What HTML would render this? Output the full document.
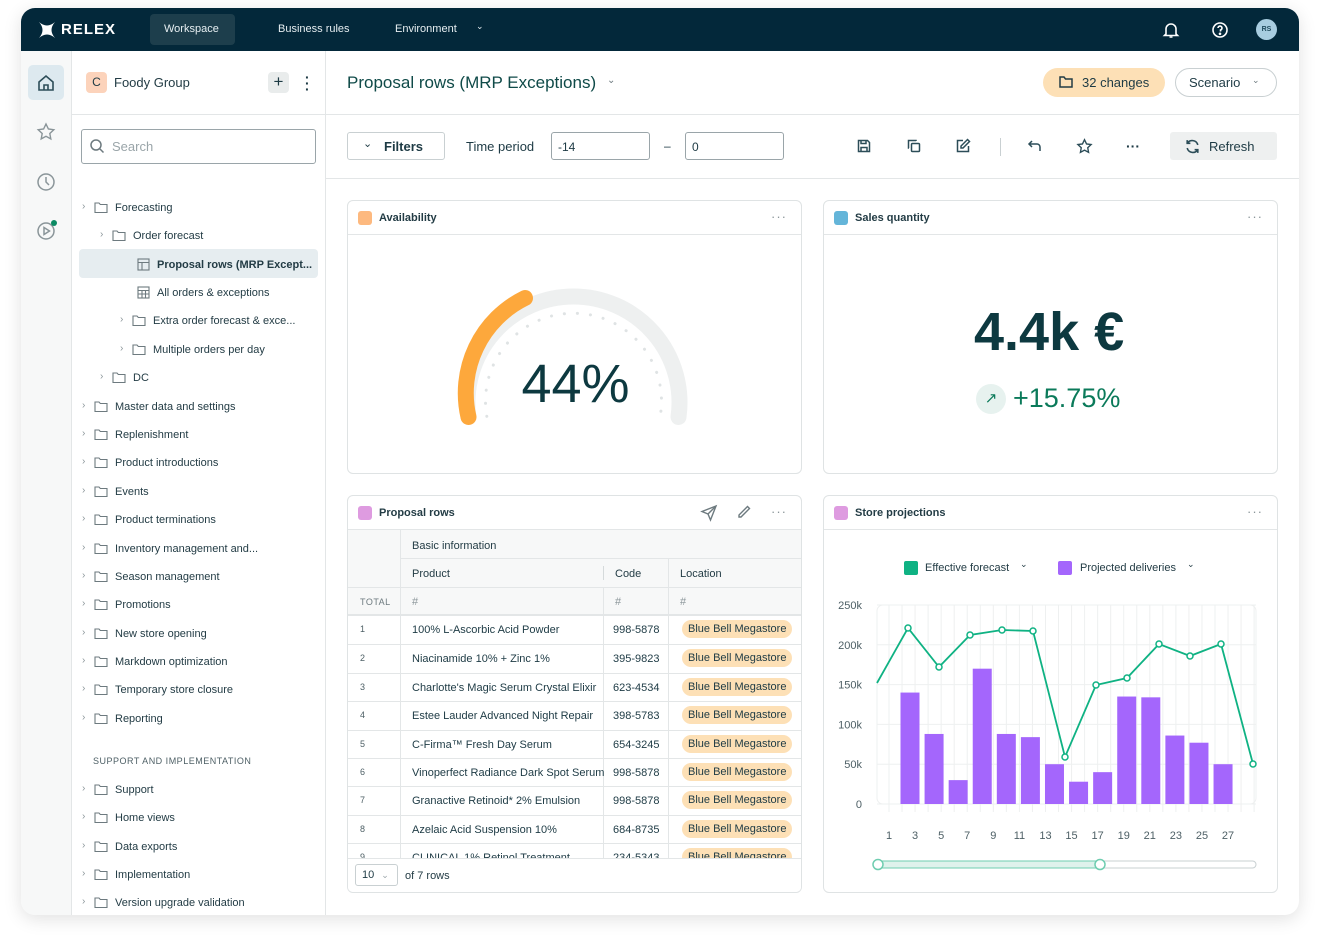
<!DOCTYPE html>
<html><head><meta charset="utf-8"><style>
*{box-sizing:border-box;margin:0;padding:0}
body{width:1320px;height:950px;background:#fff;font-family:"Liberation Sans",sans-serif;color:#1d3a44;position:relative;overflow:hidden}
.a{position:absolute}
.app{position:absolute;left:21px;top:8px;width:1278px;height:907px;border-radius:14px;overflow:hidden;background:#fff;box-shadow:0 4px 18px rgba(0,0,0,.12)}
.top{position:absolute;left:0;top:0;width:1278px;height:43px;background:#03283a;color:#e6eef1;font-size:11px}
.t{font-size:11px;color:#233c45;white-space:nowrap}
.card{position:absolute;border:1px solid #dfe3e4;border-radius:6px;background:#fff;overflow:hidden}
.ch{position:absolute;left:0;top:0;right:0;height:34px;border-bottom:1px solid #e3e6e7}
.sq{position:absolute;left:10px;top:10px;width:14px;height:14px;border-radius:3px}
.ct{position:absolute;left:31px;top:11px;font-size:11px;font-weight:bold;color:#233c45}
.dots{position:absolute;right:14px;top:8px;font-size:13px;color:#8a9599;letter-spacing:1px}
.tr{position:absolute;left:0;width:453px;height:28px;border-top:1px solid #e3e6e7;font-size:11px}
.tr span{position:absolute;top:8px}
.pill{position:absolute;left:334px;top:4px;background:#fde0b6;border-radius:10px;padding:3px 6px;font-size:11px}
.fi{position:absolute;font-size:11px;color:#233c45;white-space:nowrap}
</style></head><body>
<div class="app">
 <div class="top">
  <svg class="a" style="left:16px;top:12px" width="20" height="20" viewBox="0 0 20 20"><path d="M2 2 Q10 9 18 2 Q11 10 18 18 Q10 11 2 18 Q9 10 2 2Z" fill="#fff"/></svg>
  <div class="a" style="left:40px;top:13px;font-size:15px;font-weight:bold;letter-spacing:1px;color:#fff">RELEX</div>
  <div class="a" style="left:129px;top:6px;width:85px;height:31px;background:#1d3e4c;border-radius:4px"></div>
  <div class="a" style="left:143px;top:15px">Workspace</div>
  <div class="a" style="left:257px;top:15px">Business rules</div>
  <div class="a" style="left:374px;top:15px">Environment</div>
  <div class="a" style="left:455px;top:13px;font-size:9px">⌄</div>
  <svg class="a" style="left:1141px;top:13px" width="18" height="18" viewBox="0 0 18 18" fill="none" stroke="#fff" stroke-width="1.6"><path d="M4 13V8a5 5 0 0 1 10 0v5l1.5 1.5h-13Z"/><path d="M7.5 16h3"/></svg>
  <svg class="a" style="left:1190px;top:13px" width="18" height="18" viewBox="0 0 18 18" fill="none" stroke="#fff" stroke-width="1.6"><circle cx="9" cy="9" r="7"/><path d="M7 7a2 2 0 1 1 2.5 2v1.5"/><circle cx="9" cy="12.8" r=".5" fill="#fff"/></svg>
  <div class="a" style="left:1235px;top:11px;width:21px;height:21px;border-radius:50%;background:#a8cde0;color:#1f4a5c;font-size:7px;font-weight:bold;text-align:center;line-height:21px">RS</div>
 </div>
 <div class="a" style="left:0;top:43px;width:51px;height:864px;background:#f7f8f8;border-right:1px solid #e3e6e7"></div>
 <div class="a" style="left:7px;top:57px;width:36px;height:35px;background:#dde9ef;border-radius:5px"></div>
 <svg class="a" style="left:15px;top:65px" width="20" height="20" viewBox="0 0 20 20" fill="none" stroke="#2c4d58" stroke-width="1.6"><path d="M3 9 10 3l7 6v8H3Z"/><path d="M8 17v-5h4v5"/></svg>
 <svg class="a" style="left:15px;top:114px" width="20" height="20" viewBox="0 0 20 20" fill="none" stroke="#8a9599" stroke-width="1.4"><path d="M10 2l2.4 5 5.4.7-4 3.8 1 5.4-4.8-2.6-4.8 2.6 1-5.4-4-3.8 5.4-.7Z"/></svg>
 <svg class="a" style="left:15px;top:164px" width="20" height="20" viewBox="0 0 20 20" fill="none" stroke="#8a9599" stroke-width="1.5"><circle cx="10" cy="10" r="8"/><path d="M10 5v5l3 3"/></svg>
 <svg class="a" style="left:15px;top:213px" width="20" height="20" viewBox="0 0 20 20" fill="none" stroke="#8a9599" stroke-width="1.5"><circle cx="10" cy="10" r="8"/><path d="M8 6.5v7l5.5-3.5Z"/></svg>
 <div class="a" style="left:30px;top:212px;width:6px;height:6px;border-radius:50%;background:#0b8a63"></div>
 <div class="a" style="left:304px;top:43px;width:1px;height:864px;background:#e3e6e7"></div>
 <div class="a" style="left:51px;top:106px;width:253px;height:1px;background:#e3e6e7"></div>
 <div class="a" style="left:65px;top:64px;width:21px;height:21px;background:#fcd3bb;border-radius:4px;font-size:12px;text-align:center;line-height:21px">C</div>
 <div class="a" style="left:93px;top:67px;font-size:13px;color:#233c45">Foody Group</div>
 <div class="a" style="left:247px;top:64px;width:21px;height:21px;background:#e9ecec;border-radius:4px;font-size:17px;text-align:center;line-height:20px">+</div>
 <div class="a" style="left:284px;top:66px;font-size:14px;line-height:6px;font-weight:bold">·<br>·<br>·</div>
 <div class="a" style="left:60px;top:121px;width:235px;height:35px;border:1px solid #9aa5a9;border-radius:3px"></div>
 <svg class="a" style="left:68px;top:130px" width="16" height="16" viewBox="0 0 16 16" fill="none" stroke="#6d7a7f" stroke-width="1.5"><circle cx="7" cy="7" r="5"/><path d="M11 11l3.5 3.5"/></svg>
 <div class="a" style="left:91px;top:131px;font-size:13px;color:#9aa5a9">Search</div>
 <div class="a" style="left:58px;top:241px;width:239px;height:29px;background:#e6edf0;border-radius:4px"></div>
 <div id="tree"></div>
 <div class="a" style="left:305px;top:106px;width:973px;height:1px;background:#e3e6e7"></div>
 <div class="a" style="left:305px;top:170px;width:973px;height:1px;background:#e3e6e7"></div>
 <div class="a" style="left:326px;top:65px;font-size:17px;color:#0f4a48">Proposal rows (MRP Exceptions)</div>
 <div class="a" style="left:586px;top:67px;font-size:10px;color:#6d7a7f">⌄</div>
 <div class="a" style="left:1022px;top:60px;width:122px;height:29px;background:#fde0b6;border-radius:15px"></div>
 <svg class="a" style="left:1037px;top:66px" width="16" height="16" viewBox="0 0 16 16" fill="none" stroke="#233c45" stroke-width="1.5"><path d="M2 3h4l1.5 2H14v8H2Z"/></svg>
 <div class="a" style="left:1061px;top:67px;font-size:13px">32 changes</div>
 <div class="a" style="left:1154px;top:60px;width:102px;height:29px;border:1px solid #c9d0d2;border-radius:15px"></div>
 <div class="a" style="left:1168px;top:67px;font-size:13px">Scenario</div>
 <div class="a" style="left:1231px;top:67px;font-size:9px;color:#6d7a7f">⌄</div>
 <div class="a" style="left:326px;top:124px;width:98px;height:28px;border:1px solid #c9d0d2;border-radius:3px"></div>
 <div class="a" style="left:342px;top:129px;font-size:11px">⌄</div>
 <div class="a" style="left:363px;top:131px;font-size:13px;font-weight:bold">Filters</div>
 <div class="a" style="left:445px;top:131px;font-size:13px">Time period</div>
 <div class="a" style="left:530px;top:124px;width:99px;height:28px;border:1px solid #9aa5a9;border-radius:3px;font-size:12px;padding:7px 6px">-14</div>
 <div class="a" style="left:643px;top:131px;font-size:12px">–</div>
 <div class="a" style="left:664px;top:124px;width:99px;height:28px;border:1px solid #9aa5a9;border-radius:3px;font-size:12px;padding:7px 6px">0</div>
 <svg class="a" style="left:835px;top:130px" width="16" height="16" viewBox="0 0 16 16" fill="none" stroke="#2c4d58" stroke-width="1.5"><path d="M2.5 2.5h9l2 2v9h-11Z"/><path d="M5 2.5v3h5v-3M5 13.5v-4h6v4"/></svg>
 <svg class="a" style="left:885px;top:130px" width="16" height="16" viewBox="0 0 16 16" fill="none" stroke="#2c4d58" stroke-width="1.5"><rect x="5.5" y="5.5" width="8" height="8" rx="1"/><path d="M10 3V2.5H2.5V10H3"/></svg>
 <svg class="a" style="left:934px;top:130px" width="16" height="16" viewBox="0 0 16 16" fill="none" stroke="#2c4d58" stroke-width="1.5"><path d="M8 2.5H2.5v11h11V8"/><path d="M12.5 1.5l2 2L8 10H6V8Z"/></svg>
 <div class="a" style="left:979px;top:130px;width:1px;height:18px;background:#c9d0d2"></div>
 <svg class="a" style="left:1006px;top:130px" width="16" height="16" viewBox="0 0 16 16" fill="none" stroke="#2c4d58" stroke-width="1.5"><path d="M5 3L2 6l3 3"/><path d="M2 6h8a3 3 0 0 1 3 3v4"/></svg>
 <svg class="a" style="left:1055px;top:130px" width="17" height="17" viewBox="0 0 20 20" fill="none" stroke="#2c4d58" stroke-width="1.6"><path d="M10 2l2.4 5 5.4.7-4 3.8 1 5.4-4.8-2.6-4.8 2.6 1-5.4-4-3.8 5.4-.7Z"/></svg>
 <div class="a" style="left:1105px;top:130px;font-size:14px;font-weight:bold">···</div>
 <div class="a" style="left:1149px;top:124px;width:107px;height:28px;background:#eef0f0;border-radius:3px"></div>
 <svg class="a" style="left:1163px;top:130px" width="17" height="17" viewBox="0 0 16 16" fill="none" stroke="#2c4d58" stroke-width="1.5"><path d="M13 6.5A5.5 5.5 0 0 0 3 5M3 9.5A5.5 5.5 0 0 0 13 11"/><path d="M3 2v3h3M13 14v-3h-3"/></svg>
 <div class="a" style="left:1188px;top:131px;font-size:13px">Refresh</div>

 <div class="card" style="left:326px;top:192px;width:455px;height:274px">
  <div class="ch"><div class="sq" style="background:#fdb97f"></div><div class="ct">Availability</div><div class="dots">···</div></div>
  <svg class="a" style="left:0;top:0" width="455" height="274">
   <path d="M120.5 216 A106 106 0 1 1 330.5 216" fill="none" stroke="#eef0f0" stroke-width="16" stroke-linecap="round"/>
   <path d="M120.5 216 A106 106 0 0 1 177 97" fill="none" stroke="#fda83c" stroke-width="16" stroke-linecap="round"/>
   <path d="M138.8 215.3 A88 88 0 1 1 312.2 215.3" fill="none" stroke="#dfe3e4" stroke-width="3" stroke-dasharray="0.1 13" stroke-linecap="round"/>
  </svg>
  <div class="a" style="left:0;width:455px;top:152px;text-align:center;font-size:54px;color:#0d3940">44%</div>
 </div>
 <div class="card" style="left:802px;top:192px;width:455px;height:274px">
  <div class="ch"><div class="sq" style="background:#64b5d9"></div><div class="ct">Sales quantity</div><div class="dots">···</div></div>
  <div class="a" style="left:150px;top:100px;font-size:54px;font-weight:bold;color:#0d3940">4.4k €</div>
  <div class="a" style="left:152px;top:183px;width:30px;height:30px;border-radius:50%;background:#e7f2ef;color:#0b7a5a;font-size:15px;text-align:center;line-height:30px">↗</div>
  <div class="a" style="left:189px;top:182px;font-size:27px;color:#0b7a5a">+15.75%</div>
 </div>
 <div class="card" style="left:326px;top:487px;width:455px;height:398px">
  <div class="ch"><div class="sq" style="background:#de9be0"></div><div class="ct">Proposal rows</div><div class="dots">···</div>
   <svg class="a" style="left:352px;top:8px" width="18" height="18" viewBox="0 0 18 18" fill="none" stroke="#6d7a7f" stroke-width="1.4"><path d="M16 2 2 7.5l6 2.5 2.5 6Z"/><path d="M16 2 8 10"/></svg>
   <svg class="a" style="left:388px;top:8px" width="16" height="16" viewBox="0 0 16 16" fill="none" stroke="#6d7a7f" stroke-width="1.4"><path d="M11.5 2.5l2 2L5 13H3v-2Z"/></svg>
  </div>
  <div class="a" style="left:0;top:34px;width:455px;height:85px;background:#f7f8f8"></div>
  <div class="a" style="left:52px;top:34px;width:1px;height:330px;background:#e3e6e7"></div>
  <div class="a" style="left:52px;top:62px;width:403px;height:1px;background:#e3e6e7"></div>
  <div class="a" style="left:255px;top:91px;width:1px;height:273px;background:#e3e6e7"></div>
  <div class="a" style="left:320px;top:62px;width:1px;height:302px;background:#e3e6e7"></div>
  <div class="a" style="left:255px;top:70px;width:1px;height:14px;background:#d5dadb"></div>
  <div class="a" style="left:0;top:91px;width:455px;height:1px;background:#e3e6e7"></div>
  <div class="fi" style="left:64px;top:44px">Basic information</div>
  <div class="fi" style="left:64px;top:72px">Product</div>
  <div class="fi" style="left:267px;top:72px">Code</div>
  <div class="fi" style="left:332px;top:72px">Location</div>
  <div class="fi" style="left:12px;top:101px;font-size:9px;color:#6d7a7f;letter-spacing:.5px">TOTAL</div>
  <div class="fi" style="left:64px;top:100px;color:#8a9599">#</div>
  <div class="fi" style="left:267px;top:100px;color:#8a9599">#</div>
  <div class="fi" style="left:332px;top:100px;color:#8a9599">#</div>
  <div class="a" style="left:0;top:118px;width:455px;height:2px;background:#e3e6e7"></div>
  <div id="rows"></div>
  <div class="a" style="left:0;top:362px;width:455px;height:36px;background:#fff;border-top:1px solid #e3e6e7"></div>
  <div class="a" style="left:7px;top:368px;width:43px;height:22px;border:1px solid #c9d0d2;border-radius:3px;font-size:11px;padding:4px 6px">10 <span style="color:#9aa5a9;font-size:9px;margin-left:4px">⌄</span></div>
  <div class="fi" style="left:57px;top:374px">of 7 rows</div>
 </div>
 <div class="card" style="left:802px;top:487px;width:455px;height:398px">
  <div class="ch"><div class="sq" style="background:#de9be0"></div><div class="ct">Store projections</div><div class="dots">···</div></div>
  <div class="a" style="left:80px;top:65px;width:14px;height:14px;border-radius:2px;background:#0fb283"></div>
  <div class="fi" style="left:101px;top:66px">Effective forecast</div>
  <div class="fi" style="left:196px;top:63px;font-size:9px">⌄</div>
  <div class="a" style="left:234px;top:65px;width:14px;height:14px;border-radius:2px;background:#a466fc"></div>
  <div class="fi" style="left:256px;top:66px">Projected deliveries</div>
  <div class="fi" style="left:363px;top:63px;font-size:9px">⌄</div>
 </div>
 <svg class="a" style="left:0;top:0" width="1278" height="907" id="chart"></svg>
</div>
<script>
var tree=[[0,'Forecasting',207,'f'],[1,'Order forecast',235,'f'],[2,'Proposal rows (MRP Except...',264,'t',1],[2,'All orders &amp; exceptions',292,'t'],[2,'Extra order forecast &amp; exce...',320,'f'],[2,'Multiple orders per day',349,'f'],[1,'DC',377,'f'],[0,'Master data and settings',406,'f'],[0,'Replenishment',434,'f'],[0,'Product introductions',462,'f'],[0,'Events',491,'f'],[0,'Product terminations',519,'f'],[0,'Inventory management and...',548,'f'],[0,'Season management',576,'f'],[0,'Promotions',604,'f'],[0,'New store opening',633,'f'],[0,'Markdown optimization',661,'f'],[0,'Temporary store closure',689,'f'],[0,'Reporting',718,'f'],[0,'Support',789,'f'],[0,'Home views',817,'f'],[0,'Data exports',846,'f'],[0,'Implementation',874,'f'],[0,'Version upgrade validation',902,'f']];
var h='';
tree.forEach(function(r){var l=r[0],y=r[2]-8-5;var ox=[61,79,99][l];
 if(r[3]=='f'){h+='<div class="a" style="left:'+ox+'px;top:'+(y-1)+'px;font-size:10px;color:#8a9599">›</div>';
 h+='<svg class="a" style="left:'+(ox+12)+'px;top:'+(y-1)+'px" width="14" height="13" viewBox="0 0 14 13" fill="none" stroke="#6d7a7f" stroke-width="1.1"><path d="M1 2h4l1.3 1.5H13V11.5H1Z"/></svg>';
 h+='<div class="fi" style="left:'+(ox+33)+'px;top:'+y+'px">'+r[1]+'</div>';}
 else{h+='<svg class="a" style="left:116px;top:'+(y-1)+'px" width="13" height="13" viewBox="0 0 13 13" fill="none" stroke="#6d7a7f" stroke-width="1.1"><rect x="1" y="1" width="11" height="11"/><path d="M1 4.5h11M5 4.5V12'+(r[4]?'':'M1 8h11M8.5 4.5V12')+'"/></svg>';
 h+='<div class="fi" style="left:136px;top:'+y+'px;'+(r[4]?'font-weight:bold':'')+'">'+r[1]+'</div>';}
});
h+='<div class="fi" style="left:72px;top:748px;font-size:9px;color:#4d5f65;letter-spacing:.5px">SUPPORT AND IMPLEMENTATION</div>';
document.getElementById('tree').outerHTML=h;
var P=[['100% L-Ascorbic Acid Powder','998-5878'],['Niacinamide 10% + Zinc 1%','395-9823'],["Charlotte's Magic Serum Crystal Elixir",'623-4534'],['Estee Lauder Advanced Night Repair','398-5783'],['C-Firma™ Fresh Day Serum','654-3245'],['Vinoperfect Radiance Dark Spot Serum','998-5878'],['Granactive Retinoid* 2% Emulsion','998-5878'],['Azelaic Acid Suspension 10%','684-8735'],['CLINICAL 1% Retinol Treatment','234-5343']];
h='';P.forEach(function(p,i){var t=120+i*28.4;h+='<div class="tr" style="top:'+t+'px'+(i==0?';border-top:none':'')+'"><span style="left:12px;font-size:9px;color:#4d5f65">'+(i+1)+'</span><span style="left:64px">'+p[0]+'</span><span style="left:265px">'+p[1]+'</span><div class="pill">Blue Bell Megastore</div></div>';});
document.getElementById('rows').outerHTML=h;
var s='',ox=-21,oy=-8;
function X(v){return v+ox}function Y(v){return v+oy}
s+='<rect x="'+X(877)+'" y="'+Y(605)+'" width="379" height="199" rx="6" fill="none" stroke="#eef0f0"/>';
for(var i=0;i<29;i++){var x=889+i*13.04;s+='<line x1="'+X(x)+'" y1="'+Y(605)+'" x2="'+X(x)+'" y2="'+Y(812)+'" stroke="#eef0f0"/>';}
['250k','200k','150k','100k','50k','0'].forEach(function(l,i){var y=605+i*39.8;s+='<line x1="'+X(877)+'" y1="'+Y(y)+'" x2="'+X(1256)+'" y2="'+Y(y)+'" stroke="#eef0f0"/><text x="'+X(862)+'" y="'+Y(y+4)+'" text-anchor="end" font-size="11" fill="#4d5f65" font-family="Liberation Sans">'+l+'</text>';});
for(var i=0;i<14;i++){var x=889+i*2*13.04;s+='<text x="'+X(x)+'" y="'+Y(839)+'" text-anchor="middle" font-size="11" fill="#4d5f65" font-family="Liberation Sans">'+(1+2*i)+'</text>';}
[140,88,30,170,88,84,50,28,40,135,134,86,77,50].forEach(function(v,i){var cx=910+i*24.08,hh=v*0.796;s+='<rect x="'+X(cx-9.5)+'" y="'+Y(804-hh)+'" width="19" height="'+hh+'" fill="#a466fc"/>';});
var pts=[[877,683],[908,628],[939,667],[970,635],[1002,630],[1033,631],[1065,757],[1096,685],[1127,678],[1159,644],[1190,656],[1221,644],[1253,764]];
s+='<polyline fill="none" stroke="#0fb283" stroke-width="1.8" points="'+pts.map(function(p){return X(p[0])+','+Y(p[1])}).join(' ')+'"/>';
pts.slice(1).forEach(function(p){s+='<circle cx="'+X(p[0])+'" cy="'+Y(p[1])+'" r="3" fill="#fff" stroke="#0fb283" stroke-width="1.5"/>';});
s+='<rect x="'+X(877)+'" y="'+Y(861)+'" width="379" height="7" rx="3.5" fill="#fff" stroke="#c9d0d2"/><rect x="'+X(878)+'" y="'+Y(861)+'" width="222" height="7" fill="#dff2ec" stroke="#6fcdb0"/>';
s+='<circle cx="'+X(878)+'" cy="'+Y(864.5)+'" r="5" fill="#fff" stroke="#6fcdb0" stroke-width="1.5"/><circle cx="'+X(1100)+'" cy="'+Y(864.5)+'" r="5" fill="#fff" stroke="#6fcdb0" stroke-width="1.5"/>';
document.getElementById('chart').innerHTML=s;
</script>
</body></html>
